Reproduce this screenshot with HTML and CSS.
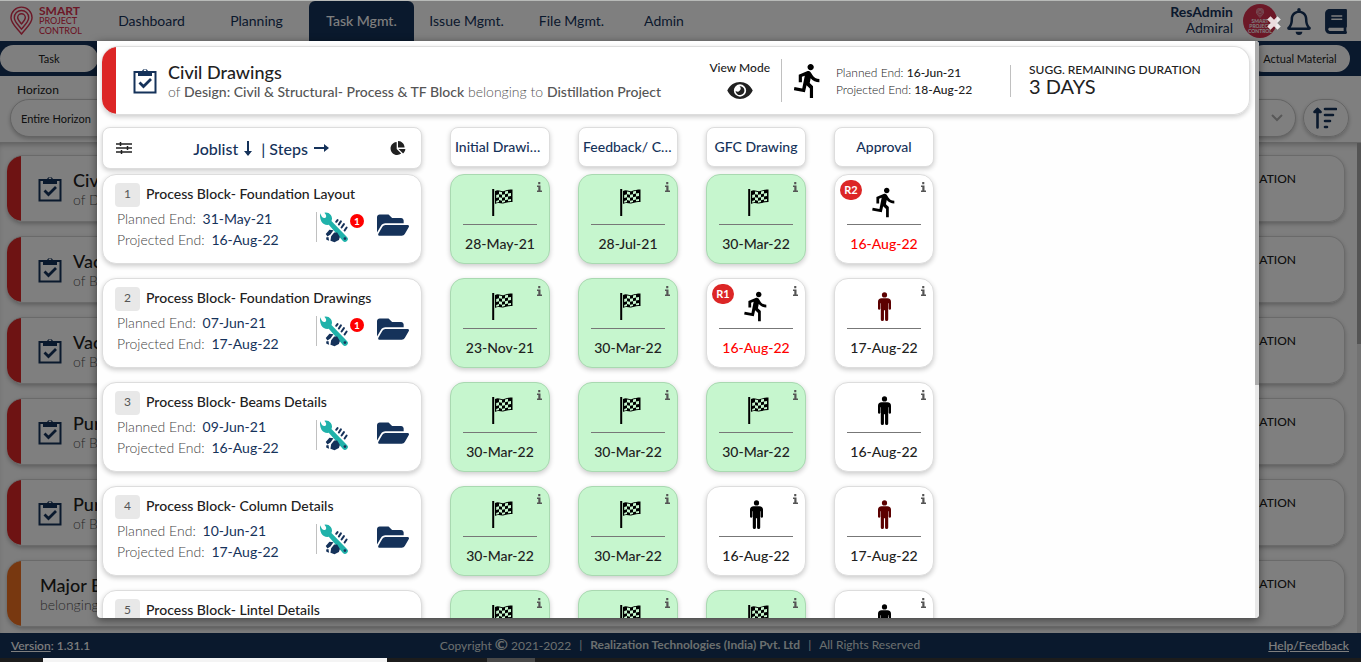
FILE: index.html
```
<!DOCTYPE html>
<html lang="en">
<head>
    <meta charset="UTF-8">
    <meta name="viewport" content="width=device-width, initial-scale=1.0">
    <title>Smart Project Control</title>
    <link rel="stylesheet" href="styles.css">
</head>
<body>
    <!-- Icon sprite -->
    <svg class="sprite" aria-hidden="true">
        <symbol id="i-pin" viewBox="0 0 24 30">
            <g fill="none" stroke="currentColor" stroke-width="1.500">
                <path d="M12 28.500C7 22 1 17.500 1 11.500a11 11 0 0 1 22 0C23 17.500 17 22 12 28.500z"/>
                <path d="M12 23.500C8.500 19 4.500 15.500 4.500 11.500a7.500 7.500 0 0 1 15 0C19.500 15.500 15.500 19 12 23.500z"/>
                <path d="M12 18C10 15.500 8 13.500 8 11.500a4 4 0 0 1 8 0C16 13.500 14 15.500 12 18z"/>
            </g>
        </symbol>
        <symbol id="i-bell" viewBox="0 0 448 512"><path fill="currentColor" d="M439.39 362.29c-19.32-20.76-55.47-51.99-55.47-154.29 0-77.7-54.48-139.9-127.94-155.16V32c0-17.67-14.32-32-31.98-32s-31.98 14.33-31.98 32v20.84C118.56 68.1 64.08 130.3 64.08 208c0 102.3-36.15 133.53-55.47 154.29-6 6.45-8.66 14.16-8.61 21.71.11 16.4 12.98 32 32.1 32h383.8c19.12 0 32-15.6 32.1-32 .05-7.55-2.61-15.27-8.61-21.71zM67.53 368c21.22-27.97 44.42-74.33 44.53-159.42 0-.2-.06-.38-.06-.58 0-61.86 50.14-112 112-112s112 50.14 112 112c0 .2-.06.38-.06.58.11 85.1 23.31 131.46 44.53 159.42H67.53zM224 512c35.32 0 63.97-28.65 63.97-64H160.03c0 35.35 28.65 64 63.97 64z"/></symbol>
        <symbol id="i-book" viewBox="0 0 448 512"><path fill="currentColor" d="M448 360V24c0-13.3-10.7-24-24-24H96C43 0 0 43 0 96v320c0 53 43 96 96 96h328c13.3 0 24-10.7 24-24v-16c0-7.5-3.5-14.3-8.9-18.7-4.2-15.4-4.2-59.3 0-74.7 5.4-4.3 8.9-11.1 8.9-18.6zM128 134c0-3.3 2.7-6 6-6h212c3.3 0 6 2.7 6 6v20c0 3.3-2.7 6-6 6H134c-3.3 0-6-2.7-6-6v-20zm0 64c0-3.3 2.7-6 6-6h212c3.3 0 6 2.7 6 6v20c0 3.3-2.7 6-6 6H134c-3.3 0-6-2.7-6-6v-20zm253.4 250H96c-17.7 0-32-14.3-32-32 0-17.6 14.4-32 32-32h285.4c-1.9 17.1-1.9 46.9 0 64z"/></symbol>
        <symbol id="i-sort" viewBox="0 0 24 22">
            <g fill="none" stroke="currentColor" stroke-width="2.600" stroke-linecap="round" stroke-linejoin="round">
                <path d="M4.500 20.500V3M1.500 5L4.500 2l3 3zM12 2h11M12 8h8M12 14h5M12 20h2"/>
            </g>
        </symbol>
        <symbol id="i-chevron" viewBox="0 0 12 8"><path fill="none" stroke="currentColor" stroke-width="2" d="M1 1l5 5 5-5"/></symbol>
        <symbol id="i-clip" viewBox="0 0 24 27">
            <path fill="none" stroke="currentColor" stroke-width="2" d="M1.500 5h21v20.500h-21z"/>
            <path fill="currentColor" fill-rule="evenodd" d="M5 4h4a3.200 3.200 0 0 1 6 0h4v5H5zM12 2.500a1.300 1.300 0 1 0 0 2.600 1.300 1.300 0 0 0 0-2.600z"/>
            <path fill="none" stroke="currentColor" stroke-width="2.800" d="M6.500 15.500l4 4 7.500-7.500"/>
        </symbol>
        <symbol id="i-eye" viewBox="0 0 27 18">
            <path fill="currentColor" fill-rule="evenodd" d="M0 9C3 3 8 0 13.500 0S24 3 27 9c-3 6-8 9-13.500 9S3 15 0 9zM13.500 2.500a6.500 6.500 0 1 0 0 13 6.500 6.500 0 0 0 0-13z"/>
            <path fill="currentColor" d="M13 4.500a4.700 4.700 0 1 1-4.200 4.800 2.600 2.600 0 0 0 4.200-4.800z"/>
        </symbol>
        <symbol id="i-run" viewBox="3 1 17 22.500"><path fill="currentColor" d="M13.490 5.480c1.100 0 2-.9 2-2s-.9-2-2-2-2 .9-2 2 .9 2 2 2zm-3.600 13.900l1-4.400 2.100 2v6h2v-7.500l-2.100-2 .6-3c1.300 1.500 3.300 2.500 5.500 2.500v-2c-1.900 0-3.500-1-4.300-2.400l-1-1.600c-.4-.6-1-1-1.700-1-.3 0-.5.1-.8.1l-5.200 2.200v4.700h2v-3.400l1.800-.7-1.600 8.100-4.900-1-.4 2 7 1.400z"/></symbol>
        <symbol id="i-man" viewBox="0 0 14 31">
            <circle cx="7" cy="3" r="2.800" fill="currentColor"/>
            <path fill="currentColor" d="M4 6.500h6a4 4 0 0 1 4 4V18a1.300 1.300 0 0 1-2.500 0v-6h-.5v17.500a1.600 1.600 0 0 1-3.400 0V19.500h-1.200v10a1.600 1.600 0 0 1-3.400 0V12h-.5v6A1.300 1.300 0 0 1 0 18v-7.500a4 4 0 0 1 4-4z"/>
        </symbol>
        <symbol id="i-flag" viewBox="0 0 21 27">
            <path stroke="currentColor" stroke-width="2" d="M1.200 0v27"/>
            <path fill="currentColor" d="M3 2c4-2 6 1 9 0s5-1.500 8.500-1.500V13c-3 0-5.500.5-8.500 1.300s-5-1.300-9 .7z"/>
            <path class="check" d="M7 2.500l3 .6v2.600l-3-.5zM13 2.500l3-.8v2.900l-3 .7zM4.200 6l2.800-.7v3L4.200 9zM10 5.700l3-.4v3l-3 .4zM16 4.600l3-.5v3l-3 .4zM7 8.300l3 .4v3l-3-.6zM13 8.300l3-.7v3l-3 .6zM4.200 12l2.800-.9v1.900l-2.800.7zM10 11.700l3-.5v1.800l-3 .7zM16 10.600l3-.5v1.800l-3 .4z"/>
        </symbol>
        <symbol id="i-info" viewBox="0 0 5 10"><path fill="currentColor" d="M1.200 0h2.100v2.200H1.200zM0 3.400h3.500v5.100H5V10H0V8.500h1.300V4.900H0z"/></symbol>
        <symbol id="i-tools" viewBox="0 0 86 92">
            <path class="teal" d="M0 4l6 11q6 5 11 1 4-6-4-14 12-2 19 7 6 8 2 18l46 47A8 8 0 0 1 68 86L26 38Q11 40 4 28-1 18 0 4z"/>
            <g fill="none" stroke="currentColor" stroke-width="6" stroke-linecap="round">
                <path d="M48 29l4-5M56 37l6-9M64 46l7-10M73 55l6-9"/>
            </g>
            <path fill="currentColor" d="M17 65l11-12 12 1-9 13-9 6zM33 72l9-11h9l8 13-3 9-13 7-12-5zM18 76l7-2 2 11-8-3z"/>
            <circle cx="74" cy="79" r="4" fill="currentColor"/>
        </symbol>
        <symbol id="i-folder" viewBox="0 60 576 390"><path fill="currentColor" d="M572.694 292.093L500.270 416.248A63.997 63.997 0 0 1 444.989 448H45.025c-18.523 0-30.064-20.093-20.731-36.093l72.424-124.155A64 64 0 0 1 152 256h399.964c18.523 0 30.064 20.093 20.730 36.093zM152 224h328v-48c0-26.510-21.490-48-48-48H272l-64-64H48C21.490 64 0 85.490 0 112v278.046l69.077-118.418C86.214 242.250 117.989 224 152 224z"/></symbol>
        <symbol id="i-sliders" viewBox="0 0 16 12"><path fill="none" stroke="currentColor" stroke-width="1.500" d="M0 2h16M0 6h16M0 10h16M4.500 0v4M11.500 4v4M5.500 8v4"/></symbol>
        <symbol id="i-pie" viewBox="0 0 544 512"><path fill="currentColor" d="M527.790 288H290.500l158.030 158.030c6.040 6.040 15.980 6.530 22.190.68 38.700-36.460 65.320-85.610 73.130-140.860 1.340-9.460-6.510-17.850-16.060-17.850zm-15.830-64.800C503.720 103.740 408.260 8.280 288.800.04 279.680-.59 272 7.100 272 16.240V240h223.770c9.140 0 16.820-7.680 16.190-16.800zM224 288V50.710c0-9.550-8.390-17.400-17.840-16.060C86.990 51.490-4.100 155.600.14 280.370 4.500 408.510 114.830 513.590 243.030 511.980c50.400-.63 96.970-16.870 135.260-44.030 7.900-5.600 8.420-17.230 1.570-24.080L224 288z"/></symbol>
        <symbol id="i-down" viewBox="0 0 8 15"><path fill="currentColor" d="M3 0h2v10h3l-4 5-4-5h3z"/></symbol>
        <symbol id="i-right" viewBox="0 0 15 8"><path fill="currentColor" d="M0 3v2h10v3l5-4-5-4v3z"/></symbol>
        <symbol id="i-close" viewBox="0 0 15 15"><path fill="none" stroke="currentColor" stroke-width="5" d="M2 2l11 11M13 2L2 13"/></symbol>
    </svg>

    <div class="app">
        <header class="topbar">
            <div class="logo">
                <svg class="logo-pin"><use href="#i-pin"/></svg>
                <div class="logo-text"><b>SMART</b><span>PROJECT</span><span>CONTROL</span></div>
            </div>
            <nav class="tabs">
                <a href="#" class="tab">Dashboard</a>
                <a href="#" class="tab">Planning</a>
                <a href="#" class="tab active">Task Mgmt.</a>
                <a href="#" class="tab">Issue Mgmt.</a>
                <a href="#" class="tab">File Mgmt.</a>
                <a href="#" class="tab last">Admin</a>
            </nav>
            <div class="user">
                <div class="user-name">ResAdmin</div>
                <div>Admiral</div>
            </div>
            <div class="avatar">
                <svg class="avatar-pin"><use href="#i-pin"/></svg>
                <span>SMART</span><span>PROJECT</span><span>CONTROL</span>
            </div>
            <button class="icon-btn" aria-label="Notifications"><svg class="bell"><use href="#i-bell"/></svg></button>
            <button class="icon-btn" aria-label="Manual"><svg class="book"><use href="#i-book"/></svg></button>
        </header>

        <div class="subbar">
            <button class="pill pill-left">Task</button>
            <button class="pill pill-right">Actual Material</button>
        </div>

        <div class="filters">
            <div class="filter">
                <label for="horizon">Horizon</label>
                <select id="horizon" class="select"><option>Entire Horizon</option></select>
            </div>
            <div class="filter-end">
                <button class="select dropdown" aria-label="More filters"><svg class="chevron"><use href="#i-chevron"/></svg></button>
                <button class="sort-btn" aria-label="Sort"><svg class="sort"><use href="#i-sort"/></svg></button>
            </div>
        </div>

        <div class="list-wrap">
            <div class="list" id="task-list"></div>
            <div class="page-scroll"><div class="page-thumb"></div></div>
        </div>

        <footer class="footer">
            <div class="version"><a href="#">Version</a>: 1.31.1</div>
            <div class="copyright">
                <span>Copyright <b class="copy">©</b> 2021-2022</span>
                <span>|</span>
                <b>Realization Technologies (India) Pvt. Ltd</b>
                <span>|</span>
                <span>All Rights Reserved</span>
            </div>
            <div class="help"><a href="#">Help/Feedback</a></div>
        </footer>

        <!-- Task popup -->
        <div class="overlay">
            <button class="close" aria-label="Close"><svg class="close-icon"><use href="#i-close"/></svg></button>
            <div class="popup" role="dialog" aria-labelledby="popup-title">
                <div class="popup-content">
                    <div class="summary">
                        <svg class="clip"><use href="#i-clip"/></svg>
                        <div class="summary-text">
                            <h1 id="popup-title" class="title">Civil Drawings</h1>
                            <div class="subtitle">of <b>Design: Civil &amp; Structural- Process &amp; TF Block</b> belonging to <b>Distillation Project</b></div>
                        </div>
                        <button class="view-mode">View Mode<svg class="eye"><use href="#i-eye"/></svg></button>
                        <div class="ends">
                            <svg class="run-big"><use href="#i-run"/></svg>
                            <div>
                                <div>Planned End: <b>16-Jun-21</b></div>
                                <div>Projected End: <b>18-Aug-22</b></div>
                            </div>
                        </div>
                        <div class="remaining">
                            <div class="remaining-label">SUGG. REMAINING DURATION</div>
                            <div class="remaining-days">3 DAYS</div>
                        </div>
                    </div>

                    <div class="grid grid-head">
                        <div class="joblist-head">
                            <button class="icon-btn" aria-label="Filter"><svg class="sliders"><use href="#i-sliders"/></svg></button>
                            <div class="joblist-title">Joblist <svg class="down"><use href="#i-down"/></svg> <span class="steps-label">| Steps <svg class="right"><use href="#i-right"/></svg></span></div>
                            <button class="icon-btn" aria-label="Chart"><svg class="pie"><use href="#i-pie"/></svg></button>
                        </div>
                        <div class="step-head">Initial Drawings</div>
                        <div class="step-head">Feedback/ Comments</div>
                        <div class="step-head">GFC Drawing</div>
                        <div class="step-head">Approval</div>
                    </div>
                    <div id="jobs"></div>
                </div>
                <div class="popup-scroll"><div class="popup-thumb"></div></div>
            </div>
        </div>
    </div>
    <div class="strip"><div class="strip-window"></div><div class="strip-mark"></div></div>

    <script src="script.js"></script>
</body>
</html>
```
FILE: styles.css
```
* {
    box-sizing: border-box;
}

body {
    margin: 0;
    height: 100vh;
    display: flex;
    flex-direction: column;
    overflow: hidden;
    font-family: Lato, sans-serif;
    font-size: 14px;
    font-weight: 300;
    color: #212121;
    background-color: #1c1c1c;
    border-top: 1px solid #b8bab8;
}

button,
select {
    font: inherit;
    color: inherit;
    border: none;
    background: none;
    padding: 0;
    cursor: pointer;
}

a {
    color: inherit;
}

b {
    font-weight: 500;
}

svg {
    display: block;
    flex: none;
}

.sprite {
    position: absolute;
    width: 0;
    height: 0;
}

.app {
    position: relative;
    flex: 1;
    min-height: 0;
    display: flex;
    flex-direction: column;
    background-color: #ffffff;
}

/* Top bar */
.topbar {
    display: flex;
    align-items: center;
    height: 40px;
    flex: none;
    padding-right: 14px;
    color: #15325a;
}

.logo {
    display: flex;
    align-items: center;
    gap: 6px;
    width: 99px;
    padding-left: 10px;
    color: #d8314f;
}

.logo-pin {
    width: 23px;
    height: 30px;
}

.logo-text {
    font-size: 9px;
    line-height: 10px;
    font-weight: 500;
    display: flex;
    flex-direction: column;
}

.logo-text b {
    font-size: 12px;
    font-weight: 700;
}

.tabs {
    display: flex;
    align-self: stretch;
    flex: 1;
}

.tab {
    width: 105px;
    display: flex;
    align-items: center;
    justify-content: center;
    padding-bottom: 2px;
    text-decoration: none;
    font-weight: 400;
    border-radius: 6px 6px 0 0;
}

.tab.last {
    width: 80px;
}

.tab.active {
    background-color: #15325a;
    color: #ffffff;
    font-weight: 500;
}

.user {
    text-align: right;
    line-height: 16px;
    padding-bottom: 2px;
    margin-right: 10px;
    font-weight: 400;
}

.user-name {
    font-weight: 700;
}

.avatar {
    width: 34px;
    height: 34px;
    border-radius: 50%;
    background-color: #d8314f;
    color: #ffffff;
    display: flex;
    flex-direction: column;
    align-items: center;
    font-size: 5px;
    line-height: 5px;
    font-weight: 700;
    margin-right: 10px;
}

.avatar-pin {
    width: 8px;
    height: 10px;
    margin: 4px 0 1px;
}

.icon-btn {
    display: flex;
}

.bell {
    width: 24px;
    height: 27px;
    margin-right: 14px;
}

.book {
    width: 22px;
    height: 25px;
}

.subbar {
    display: flex;
    justify-content: space-between;
    align-items: center;
    height: 35px;
    flex: none;
    background-color: #15325a;
    padding-right: 11px;
}

.pill {
    height: 27px;
    background-color: #ffffff;
    border-radius: 14px;
    font-size: 11px;
    font-weight: 400;
}

.pill-left {
    width: 98px;
}

.pill-right {
    width: 100px;
}

/* Filters */
.filters {
    display: flex;
    justify-content: space-between;
    height: 67px;
    flex: none;
    padding: 5px 12px 0 10px;
    border-bottom: 1px solid #cccccc;
    font-size: 11px;
    font-weight: 400;
}

.filter label {
    display: block;
    padding-left: 7px;
    line-height: 18px;
    font-size: 12px;
}

.select {
    height: 38px;
    border-radius: 19px;
    border: 1px solid #c8c8c8;
    background-color: #ffffff;
    box-shadow: 0 2px 4px rgba(0, 0, 0, 0.25);
}

select.select {
    appearance: none;
    width: 140px;
    padding-left: 10px;
}

.filter-end {
    display: flex;
    gap: 7px;
    align-items: flex-start;
    padding-top: 18px;
}

.dropdown {
    width: 120px;
    display: flex;
    align-items: center;
    justify-content: flex-end;
    padding-right: 12px;
    color: #b0b0b0;
}

.chevron {
    width: 12px;
    height: 8px;
}

.sort-btn {
    width: 46px;
    height: 38px;
    display: flex;
    align-items: center;
    justify-content: center;
    border: 1px solid #c8c8c8;
    border-radius: 19px;
    box-shadow: 0 2px 4px rgba(0, 0, 0, 0.25);
    color: #15325a;
    padding-right: 3px;
}

.sort {
    width: 24px;
    height: 22px;
}

/* Task list */
.list-wrap {
    flex: 1;
    min-height: 0;
    display: flex;
    background-color: #fcfcfc;
    box-shadow: inset 0 4px 6px -3px rgba(0, 0, 0, 0.3);
}

.list {
    flex: 1;
    overflow: hidden;
    padding: 12px 12px 0 7px;
}

.task,
.summary {
    display: flex;
    align-items: center;
    height: 67px;
    margin-bottom: 14px;
    padding-left: 14px;
    border: 1px solid #d4d4d4;
    border-left: none;
    border-radius: 16px;
    background: linear-gradient(to right, #dc2626 14px, #ffffff 14px) border-box;
    box-shadow: 0 2px 4px rgba(0, 0, 0, 0.25);
}

.task.orange {
    background-image: linear-gradient(to right, #f07020 14px, #ffffff 14px);
}

.task-text,
.summary-text {
    flex: 1;
    margin-left: 11px;
}

.task.orange .task-text {
    margin-left: 19px;
}

.task-label {
    font-size: 12px;
    font-weight: 500;
    align-self: flex-start;
    padding-top: 15px;
    margin-right: 48px;
}

.page-scroll {
    width: 4px;
    background-color: #e4e4e4;
}

.page-thumb {
    height: 41%;
    background-color: #a8a8a8;
}

/* Footer */
.footer {
    display: flex;
    align-items: center;
    justify-content: space-between;
    height: 25px;
    flex: none;
    padding: 0 12px 1px 11px;
    background-color: #15325a;
    color: #ffffff;
    font-size: 12px;
}

.version,
.help {
    flex: 1;
    font-weight: 500;
}

.help {
    text-align: right;
}

.copyright {
    display: flex;
    align-items: center;
    gap: 8px;
    line-height: 16px;
    font-weight: 400;
    color: #d4dede;
}

.copyright b {
    font-weight: 700;
}

.copyright .copy {
    font-size: 16px;
}

/* Popup */
.overlay {
    position: absolute;
    inset: 0;
    padding: 40px 102px;
    padding-left: 97px;
    display: flex;
    background-color: rgba(0, 0, 0, 0.5);
}

.close {
    position: absolute;
    top: 15px;
    right: 80px;
    color: #ffffff;
    opacity: 0.85;
}

.close-icon {
    width: 14px;
    height: 14px;
}

.popup {
    flex: 1;
    min-width: 0;
    display: flex;
    overflow: hidden;
    border-radius: 0 4px 4px 4px;
    background-color: #fefefe;
    box-shadow: 0 2px 8px rgba(0, 0, 0, 0.5);
}

.popup-content {
    flex: 1;
    min-width: 0;
    overflow: hidden;
    padding: 5px 5px 0;
}

.popup-scroll {
    width: 4px;
    background-color: #e8e8e8;
}

.popup-thumb {
    height: 344px;
    background-color: #acacac;
}

.summary {
    height: 69px;
    margin-bottom: 12px;
    border-color: #dddddd;
    box-shadow: 0 2px 5px rgba(0, 0, 0, 0.2);
    font-size: 12px;
}

.clip {
    width: 24px;
    height: 27px;
    margin-left: 17px;
    color: #15325a;
}

.title {
    margin: 0;
    font-size: 18px;
    line-height: 22px;
    font-weight: 500;
}

.subtitle {
    font-size: 14px;
    line-height: 18px;
    color: #555555;
}

.view-mode {
    display: flex;
    flex-direction: column;
    align-items: center;
    gap: 7px;
    line-height: 14px;
    font-weight: 500;
    padding: 0 11px 2px 0;
}

.eye {
    width: 26px;
    height: 17px;
}

.ends {
    display: flex;
    align-items: center;
    gap: 15px;
    height: 43px;
    width: 229px;
    padding-left: 12px;
    border-left: 1px solid #c0c0c0;
    line-height: 17px;
}

.run-big {
    width: 27px;
    height: 36px;
    color: #000000;
}

.remaining {
    width: 239px;
    padding-left: 18px;
    border-left: 1px solid #c0c0c0;
}

.remaining-label {
    font-weight: 500;
    line-height: 10px;
}

.remaining-days {
    font-size: 20px;
    line-height: 22px;
    font-weight: 400;
}

/* Job rows */
.grid {
    display: grid;
    grid-template-columns: 320px repeat(4, 100px);
    column-gap: 28px;
    align-items: start;
    margin-bottom: 14px;
}

.grid-head {
    margin-bottom: 5px;
}

.joblist-head,
.step-head {
    border: 1px solid #dddddd;
    border-radius: 8px;
    background-color: #ffffff;
    box-shadow: 0 2px 5px rgba(0, 0, 0, 0.2);
    color: #15325a;
    font-weight: 500;
}

.joblist-head {
    height: 42px;
    display: flex;
    align-items: center;
    justify-content: space-between;
    padding: 0 15px 0 13px;
}

.joblist-head .icon-btn {
    color: #212121;
}

.joblist-title,
.steps-label {
    display: flex;
    align-items: center;
    gap: 6px;
    font-size: 16px;
}

.steps-label {
    margin-left: 3px;
}

.down {
    width: 8px;
    height: 15px;
}

.right {
    width: 15px;
    height: 8px;
}

.sliders {
    width: 16px;
    height: 12px;
}

.pie {
    width: 16px;
    height: 14px;
}

.step-head {
    height: 40px;
    line-height: 38px;
    padding: 0 4px;
    text-align: center;
    white-space: nowrap;
    overflow: hidden;
    text-overflow: ellipsis;
}

.job,
.step {
    height: 90px;
    border: 1px solid #dddddd;
    border-radius: 14px;
    background-color: #ffffff;
    box-shadow: 0 2px 5px rgba(0, 0, 0, 0.2);
}

.job {
    padding: 8px 12px 0;
}

.job-head {
    display: flex;
    gap: 6px;
    height: 25px;
    line-height: 22px;
    font-weight: 500;
}

.job-no {
    width: 25px;
    height: 24px;
    border-radius: 4px;
    background-color: #e8e8e8;
    text-align: center;
    font-size: 12px;
    font-weight: 400;
    color: #555555;
}

.job-body {
    display: flex;
    padding-left: 2px;
}

.job-dates {
    flex: 1;
    line-height: 21px;
    color: #444444;
}

.job-dates span {
    color: #15325a;
    font-weight: 400;
    margin-left: 3px;
}

.job-tools {
    display: flex;
    align-items: flex-start;
    height: 30px;
    margin-top: 4px;
    padding-left: 3px;
    border-left: 1px solid #c0c0c0;
    color: #15325a;
}

.tools {
    width: 29px;
    height: 31px;
}

.teal {
    fill: #20b2aa;
}

.count {
    width: 14px;
    height: 14px;
    margin: 2px 0 0 1px;
    border-radius: 50%;
    background-color: #ff0000;
    color: #ffffff;
    text-align: center;
    font-size: 10px;
    line-height: 14px;
    font-weight: 700;
}

.count.empty {
    visibility: hidden;
}

.folder {
    width: 32px;
    height: 22px;
    margin: 2px 0 0 13px;
}

.step {
    position: relative;
    display: flex;
    flex-direction: column;
    align-items: center;
}

.step.done {
    background-color: #c6f6ce;
    border-color: #a9d9b1;
}

.step-icon {
    height: 51px;
    width: 74px;
    padding-top: 4px;
    margin-top: 1px;
    display: flex;
    align-items: center;
    justify-content: center;
    border-bottom: 1px solid #777777;
    color: #000000;
}

.step-icon.late {
    color: #5c0000;
}

.flag {
    width: 21px;
    height: 27px;
    margin-left: 5px;
}

.check {
    fill: #c6f6ce;
}

.run {
    width: 24px;
    height: 31px;
}

.man {
    width: 13px;
    height: 31px;
}

.step-date {
    line-height: 38px;
    font-weight: 500;
}

.step-date.due {
    color: #ff0000;
}

.info-btn {
    position: absolute;
    top: 7px;
    right: 7px;
    color: #555555;
}

.info {
    width: 5px;
    height: 10px;
}

.revision {
    position: absolute;
    top: 5px;
    left: 5px;
    width: 22px;
    height: 20px;
    border-radius: 10px;
    background-color: #dc2626;
    color: #ffffff;
    text-align: center;
    font-size: 11px;
    line-height: 19px;
    font-weight: 700;
}

/* Bottom strip */
.strip {
    display: flex;
    height: 4px;
    flex: none;
    padding-left: 43px;
    gap: 100px;
}

.strip-window {
    width: 344px;
    background-color: #f4f4f4;
}

.strip-mark {
    width: 48px;
    background-color: #484848;
}
```
FILE: script.js
```
// Tasks behind the popup
const tasks = [
    ['Civil Drawings', 'of Design'],
    ['Vacuum', 'of Basic'],
    ['Vacuum', 'of Basic'],
    ['Purchase', 'of Basic'],
    ['Purchase', 'of Basic'],
    ['Major Equipment', 'belonging to', 'orange']
];

// Jobs with one entry per step: [state, date, revision]
const jobs = [
    { name: 'Foundation Layout', planned: '31-May-21', projected: '16-Aug-22', count: 1,
      steps: [['done', '28-May-21'], ['done', '28-Jul-21'], ['done', '30-Mar-22'], ['run', '16-Aug-22', 'R2']] },
    { name: 'Foundation Drawings', planned: '07-Jun-21', projected: '17-Aug-22', count: 1,
      steps: [['done', '23-Nov-21'], ['done', '30-Mar-22'], ['run', '16-Aug-22', 'R1'], ['late', '17-Aug-22']] },
    { name: 'Beams Details', planned: '09-Jun-21', projected: '16-Aug-22', count: 0,
      steps: [['done', '30-Mar-22'], ['done', '30-Mar-22'], ['done', '30-Mar-22'], ['wait', '16-Aug-22']] },
    { name: 'Column Details', planned: '10-Jun-21', projected: '17-Aug-22', count: 0,
      steps: [['done', '30-Mar-22'], ['done', '30-Mar-22'], ['wait', '16-Aug-22'], ['late', '17-Aug-22']] },
    { name: 'Lintel Details', planned: '11-Jun-21', projected: '16-Aug-22', count: 0,
      steps: [['done', '30-Mar-22'], ['done', '30-Mar-22'], ['done', '30-Mar-22'], ['wait', '16-Aug-22']] }
];

const icons = { done: 'flag', run: 'run', late: 'man', wait: 'man' };

function icon(name) {
    return `<svg class="${name}"><use href="#i-${name}"/></svg>`;
}

function taskHtml([title, sub, color]) {
    return `<div class="task ${color || ''}">
        ${color ? '' : icon('clip')}
        <div class="task-text"><div class="title">${title}</div><div class="subtitle">${sub}</div></div>
        <div class="task-label">SUGG. REMAINING DURATION</div>
    </div>`;
}

function stepHtml([state, date, rev]) {
    return `<div class="step ${state === 'done' ? 'done' : ''}">
        ${rev ? `<span class="revision">${rev}</span>` : ''}
        <button class="info-btn" aria-label="Info">${icon('info')}</button>
        <div class="step-icon ${state === 'late' ? 'late' : ''}">${icon(icons[state])}</div>
        <div class="step-date ${state === 'run' ? 'due' : ''}">${date}</div>
    </div>`;
}

function jobHtml(job, i) {
    return `<div class="grid">
        <div class="job">
            <div class="job-head"><span class="job-no">${i + 1}</span>Process Block- ${job.name}</div>
            <div class="job-body">
                <div class="job-dates">
                    <div>Planned End: <span>${job.planned}</span></div>
                    <div>Projected End: <span>${job.projected}</span></div>
                </div>
                <div class="job-tools">
                    ${icon('tools')}
                    <span class="count ${job.count ? '' : 'empty'}">${job.count || ''}</span>
                    ${icon('folder')}
                </div>
            </div>
        </div>
        ${job.steps.map(stepHtml).join('')}
    </div>`;
}

document.getElementById('task-list').innerHTML = tasks.map(taskHtml).join('');
document.getElementById('jobs').innerHTML = jobs.map(jobHtml).join('');
```
